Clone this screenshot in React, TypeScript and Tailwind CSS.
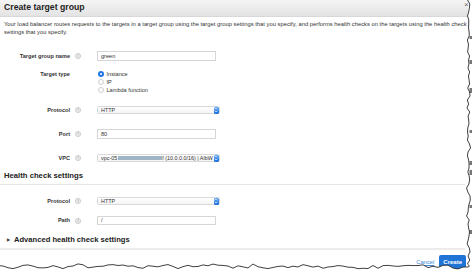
import React from "react";

const rnd = (i: number) => {
  const x = Math.sin(i * 12.9898 + 78.233) * 43758.5453;
  return x - Math.floor(x);
};

function Tear() {
  const right: [number, number][] = [];
  for (let i = 0; i <= 67; i++) {
    const y = i * 4;
    const x = 468.5 + (rnd(i) - 0.5) * 3 + Math.sin(i * 0.9) * 0.7;
    right.push([x, Math.min(y, 266)]);
  }
  const bottom: [number, number][] = [];
  for (let i = 0; i <= 94; i++) {
    const x = 468 - i * 5;
    const y = 266.5 + (rnd(i + 200) - 0.5) * 4 + Math.sin(i * 0.7) * 0.8;
    bottom.push([Math.max(x, -2), y]);
  }
  const line = [...right, ...bottom];
  const pts = line.map((p) => p.join(",")).join(" ");
  const fillPts = `474,0 ${pts} -2,272 474,272`;
  const blocks = [36, 60, 88, 130, 161, 170, 205, 230];
  return (
    <svg
      className="absolute left-0 top-0 pointer-events-none"
      width={474}
      height={272}
      viewBox="0 0 474 272"
    >
      <polygon points={fillPts} fill="#ffffff" />
      {blocks.map((b, i) => (
        <rect key={i} x={469.5} y={b} width={2.5} height={3 + (i % 3)} fill="#777" />
      ))}
      <polyline points={pts} fill="none" stroke="#2a2a2a" strokeWidth={0.9} strokeLinejoin="round" />
    </svg>
  );
}

function Info() {
  return (
    <div className="w-[6px] h-[6px] rounded-full border border-[#c8c8c8] bg-[#f3f3f3] flex items-center justify-center text-[4px] leading-none text-[#999] font-bold">
      i
    </div>
  );
}

function Row({
  label,
  h,
  mt,
  children,
  info = true,
}: {
  label: string;
  h: string;
  mt: string;
  children: React.ReactNode;
  info?: boolean;
}) {
  return (
    <div className={`flex items-center ${h} ${mt}`}>
      <div className="w-[70px] text-right font-bold text-[5.6px] text-[#333] whitespace-nowrap">{label}</div>
      <div className="w-[27px] flex items-center pl-[5px]">{info ? <Info /> : null}</div>
      {children}
    </div>
  );
}

function Input({ value, h }: { value: string; h: string }) {
  return (
    <div className={`w-[119px] ${h} border border-[#d6d6d6] bg-white flex items-center pl-[3px] text-[5.6px] text-[#333]`}>
      {value}
    </div>
  );
}

function Stepper() {
  return (
    <div className="w-[5px] h-[7px] rounded-[1.5px] bg-gradient-to-b from-[#5aa3f5] to-[#1c6fe0] flex items-center justify-center">
      <svg width="4" height="6" viewBox="0 0 4 6">
        <path d="M0.8 2.3 L2 1 L3.2 2.3 M0.8 3.7 L2 5 L3.2 3.7" stroke="#fff" strokeWidth="0.7" fill="none" />
      </svg>
    </div>
  );
}

function Select({ children }: { children: React.ReactNode }) {
  return (
    <div className="w-[123px] h-[8px] border border-[#d9d9d9] rounded-[1.5px] bg-gradient-to-b from-white to-[#f4f4f4] flex items-center pl-[3px] pr-[0.5px] text-[5.4px] text-[#333]">
      <div className="flex-1 flex items-center whitespace-nowrap overflow-hidden">{children}</div>
      <Stepper />
    </div>
  );
}

function Radio({ checked, label }: { checked?: boolean; label: string }) {
  return (
    <div className="flex items-center h-[8px] text-[5.6px] text-[#333]">
      {checked ? (
        <div className="w-[5.5px] h-[5.5px] rounded-full bg-[#2277e6] flex items-center justify-center">
          <div className="w-[2px] h-[2px] rounded-full bg-white" />
        </div>
      ) : (
        <div className="w-[5.5px] h-[5.5px] rounded-full border border-[#cfcfcf] bg-white" />
      )}
      <span className="ml-[3px]">{label}</span>
    </div>
  );
}

export default function App() {
  return (
    <div
      className="relative w-[474px] h-[272px] overflow-hidden bg-white"
      style={{ fontFamily: '"Liberation Sans", Arial, Helvetica, sans-serif' }}
    >
      <div className="w-[468px]">
        <div className="h-[17px] bg-gradient-to-b from-[#f5f5f5] to-[#e3e3e3] border-b border-[#d8d8d8] pl-[4px] flex items-center">
          <span className="text-[8.7px] font-bold text-[#222]">Create target group</span>
        </div>
        <div className="mt-[3px] px-[4px] text-[5.8px] tracking-[0.01px] leading-[8px] text-[#333] whitespace-nowrap">
          Your load balancer routes requests to the targets in a target group using the target group settings that you specify, and performs health checks on the targets using the health check
          <br />
          settings that you specify.
        </div>

        <Row label="Target group name" h="h-[10px]" mt="mt-[15px]">
          <Input value="green" h="h-[10px]" />
        </Row>

        <div className="flex mt-[9px]">
          <div className="w-[70px] h-[8px] flex items-center justify-end font-bold text-[5.6px] text-[#333]">Target type</div>
          <div className="w-[27px]" />
          <div className="flex flex-col pl-[1px]">
            <Radio checked label="Instance" />
            <Radio label="IP" />
            <Radio label="Lambda function" />
          </div>
        </div>

        <Row label="Protocol" h="h-[8px]" mt="mt-[12px]">
          <Select>HTTP</Select>
        </Row>

        <Row label="Port" h="h-[10px]" mt="mt-[15px]">
          <Input value="80" h="h-[10px]" />
        </Row>

        <Row label="VPC" h="h-[8px]" mt="mt-[15px]">
          <Select>
            <span>vpc-05</span>
            <span className="inline-block w-[44px] h-[4px] bg-[#9fb4c4] mx-[0.5px]" />
            <span>f (10.0.0.0/16) | AlbW</span>
          </Select>
        </Row>

        <div className="mt-[9px] pl-[4px] h-[10px] flex items-center text-[7.7px] font-bold text-[#222]">Health check settings</div>
        <div className="mt-[3px] h-[1px] bg-[#e6e6e6] w-[465px]" />

        <Row label="Protocol" h="h-[8px]" mt="mt-[12px]">
          <Select>HTTP</Select>
        </Row>

        <Row label="Path" h="h-[9px]" mt="mt-[11px]">
          <Input value="/" h="h-[9px]" />
        </Row>

        <div className="mt-[10px] pl-[7px] h-[10px] flex items-center text-[7.6px] font-bold text-[#222]">
          <span className="text-[4px] mr-[4px] text-[#444]">▶</span>
          Advanced health check settings
        </div>
        <div className="mt-[3px] h-[2px] bg-[#ececec] w-[465px]" />

        <div className="mt-[5px] flex justify-end items-center pr-[2px]">
          <span className="text-[5.8px] text-[#3b87e0] mr-[5px] underline">Cancel</span>
          <div className="h-[14px] px-[4px] rounded-[2px] bg-[#1f74d6] text-white font-bold text-[6px] flex items-start pt-[3px]">Create</div>
        </div>
      </div>

      <div className="absolute left-[464px] top-[1px] text-[8px] leading-none text-[#666]">×</div>
      <Tear />
    </div>
  );
}
